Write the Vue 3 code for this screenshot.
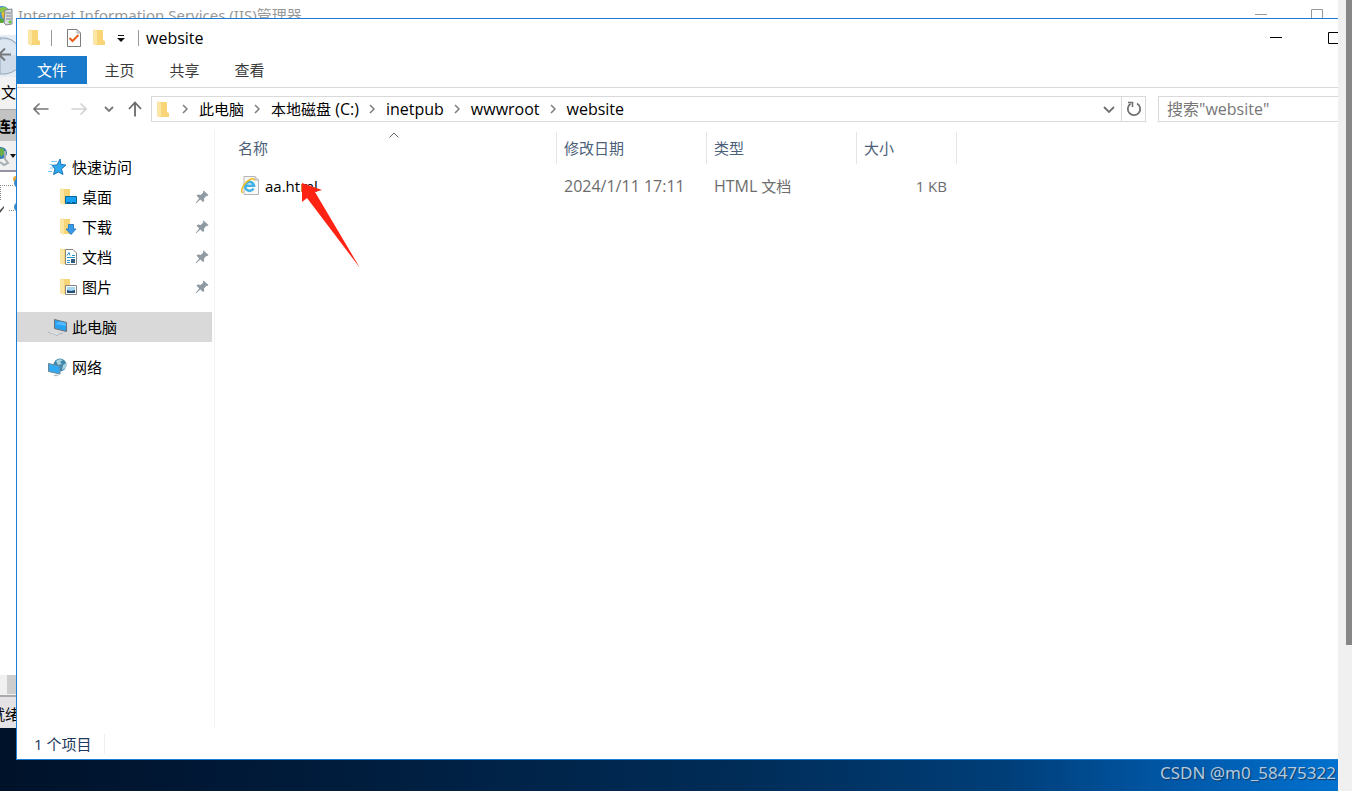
<template>
  <div class="desktop">
    <div class="desktop__screen">
      <section class="iis" aria-label="IIS">
        <header class="iis__title">
          <svg class="iis__logo" viewBox="0 0 14 22">
            <circle cx="2" cy="9" r="8" fill="#3f96d0" />
            <path d="M-2 4Q4 0 8 4L5 8L0 7Z" fill="#8fc64a" />
            <path d="M1 8L6 6L7 11L3 14Z" fill="#e8b92e" />
            <path d="M0 13L5 15L3 18H-2Z" fill="#58a83a" />
            <path d="M5 5L12 4V19L6 20L4 18Z" fill="#d7dbdd" stroke="#7f888d" />
            <path d="M6 8H11M6 11H11M6 14H11" stroke="#7c868c" />
            <circle cx="10" cy="17" r="1.5" fill="#62c938" />
          </svg>
          <span class="iis__name">Internet Information Services (IIS)管理器</span>
          <span class="iis__controls">
            <svg viewBox="0 0 12 12"><path d="M0 5.5H12" stroke="#999" /></svg>
            <svg viewBox="0 0 12 12"><path d="M.5 .5H11.5V11.5H.5Z" fill="none" stroke="#999" /></svg>
          </span>
        </header>
        <div class="iis__nav">
          <svg viewBox="0 0 16 40">
            <path d="M0 3H6Q12 4 17 9V34Q12 38 6 39H0Z" fill="#cfdbe8" stroke="#93a3b5" />
            <path d="M0 5H6Q12 6 16 11V20H0Z" fill="#dce6f0" />
            <path d="M-4 19.500H11M5 13.500L-1 19.500L5 25.500" fill="none" stroke="#77797c" stroke-width="2" />
          </svg>
        </div>
        <div class="iis__menu">文件</div>
        <div class="iis__panel">连接</div>
        <div class="iis__tools">
          <svg viewBox="0 0 16 30">
            <circle cx="1" cy="12" r="6" fill="#397fb5" />
            <path d="M-2 8L3 7L5 12L1 16Z" fill="#68ad45" />
            <path d="M5 10V18L8 22L4 24L0 21" fill="none" stroke="#a8afb4" stroke-width="2" />
            <path d="M10 13H16L13 17Z" fill="#111" />
          </svg>
        </div>
        <div class="iis__tree">
          <svg viewBox="0 0 16 50">
            <path d="M0 13.500H14M.5 15V28M9 38.500H14" fill="none" stroke="#888" stroke-dasharray="1 1" />
            <circle cx="16" cy="7" r="3" fill="#e6ae3b" />
            <circle cx="19" cy="11" r="5" fill="#3c8bc4" />
            <circle cx="19" cy="35" r="5" fill="#3c8bc4" />
            <path d="M0 38L4 34V36L0 41Z" fill="#555" />
          </svg>
        </div>
        <div class="iis__scroll"><span></span></div>
        <footer class="iis__status">就绪</footer>
      </section>

      <section class="explorer">
        <header class="titlebar">
          <svg class="folder" viewBox="0 0 12 17"><use href="#folder" /></svg>
          <i class="titlebar__rule titlebar__rule--first"></i>
          <button class="titlebar__button" type="button" aria-label="属性">
            <svg width="14" height="18" viewBox="0 0 14 18">
              <path d="M.5 .5H10L13.500 4V17.500H.5Z" fill="#fff" stroke="#7d7d7d" />
              <path d="M10 .5V4H13.500" fill="none" stroke="#a5a5a5" />
              <path d="M2.500 9L5.500 12L11.500 6" fill="none" stroke="#e8601c" stroke-width="2" />
            </svg>
          </button>
          <button class="titlebar__button titlebar__button--new" type="button" aria-label="新建文件夹">
            <svg class="folder" viewBox="0 0 12 17"><use href="#folder" /></svg>
          </button>
          <button class="titlebar__button titlebar__button--more" type="button" aria-label="自定义快速访问工具栏">
            <svg width="8" height="8" viewBox="0 0 8 8">
              <path d="M1 1.500H7" stroke="#111" />
              <path d="M0 4H8L4 8Z" fill="#111" />
            </svg>
          </button>
          <i class="titlebar__rule"></i>
          <h1 class="titlebar__title">website</h1>
          <button class="titlebar__control" type="button" aria-label="最小化">
            <svg viewBox="0 0 12 12"><path d="M0 5.500H12" stroke="#000" /></svg>
          </button>
          <button class="titlebar__control titlebar__control--max" type="button" aria-label="最大化">
            <svg viewBox="0 0 12 12"><path d="M.5 .5H11.500V11.500H.5Z" fill="none" stroke="#000" /></svg>
          </button>
        </header>

        <nav class="tabs">
          <button
            v-for="tab in tabs"
            :key="tab"
            class="tabs__item"
            :class="{ 'tabs__item--file': tab === '文件' }"
            type="button"
          >
            {{ tab }}
          </button>
        </nav>

        <div class="toolbar">
          <button class="toolbar__button" type="button" aria-label="后退">
            <svg width="16" height="16" viewBox="0 0 16 16">
              <path d="M1 8H15.500M6.500 2.500L1 8L6.500 13.500" fill="none" stroke="#767676" stroke-width="1.600" />
            </svg>
          </button>
          <button class="toolbar__button toolbar__button--forward" type="button" aria-label="前进">
            <svg width="16" height="16" viewBox="0 0 16 16">
              <path d="M.5 8H15M9.500 2.500L15 8L9.500 13.500" fill="none" stroke="#d2d2d2" stroke-width="1.600" />
            </svg>
          </button>
          <button class="toolbar__button toolbar__button--recent" type="button" aria-label="最近浏览的位置">
            <svg width="10" height="10" viewBox="0 0 10 10">
              <path d="M1 3L5 7L9 3" fill="none" stroke="#777" stroke-width="1.800" />
            </svg>
          </button>
          <button class="toolbar__button toolbar__button--up" type="button" aria-label="上移">
            <svg width="14" height="16" viewBox="0 0 14 16">
              <path d="M7 15.500V1.500M1 8L7 1.500L13 8" fill="none" stroke="#6a6a6a" stroke-width="1.800" />
            </svg>
          </button>
          <div class="address">
            <svg class="folder" viewBox="0 0 12 17"><use href="#folder" /></svg>
            <span v-for="crumb in crumbs" :key="crumb.name + crumb.latin" class="address__crumb">
              <svg width="6" height="10" viewBox="0 0 6 10">
                <path d="M1 1L5 5L1 9" fill="none" stroke="#7c7c7c" stroke-width="1.500" />
              </svg>
              <a href="#" @click.prevent>{{ crumb.name }}<span class="latin">{{ crumb.latin }}</span></a>
            </span>
            <button class="address__drop" type="button" aria-label="以前的位置">
              <svg width="12" height="10" viewBox="0 0 12 10">
                <path d="M1 3L6 8L11 3" fill="none" stroke="#707070" stroke-width="1.800" />
              </svg>
            </button>
            <button class="address__refresh" type="button" aria-label="刷新">
              <svg width="16" height="16" viewBox="0 0 16 16">
                <path d="M11 2.500A6.200 6.200 0 1 1 4.500 2.800" fill="none" stroke="#707070" stroke-width="1.800" />
                <path d="M2 1.500H6.500V6" fill="none" stroke="#707070" stroke-width="1.600" />
              </svg>
            </button>
          </div>
          <input v-model="query" class="search" type="text" aria-label="搜索" placeholder="搜索&quot;website&quot;" />
        </div>

        <div class="content">
          <nav class="sidebar">
            <a
              v-for="item in places"
              :key="item.name"
              class="sidebar__item"
              :class="{ 'sidebar__item--child': item.pinned, 'sidebar__item--active': item.active, 'sidebar__item--root': !item.pinned }"
              href="#"
              @click.prevent
            >
              <svg class="sidebar__icon" viewBox="0 0 20 20"><use :href="`#${item.icon}`" /></svg>
              <span>{{ item.name }}</span>
              <svg v-if="item.pinned" class="sidebar__pin" viewBox="0 0 14 14">
                <path d="M8.500 0.500L13.500 5L12.500 6L11.500 5.800L9 8.500L9.200 11L8 12L5.300 9.500L1.500 13L.8 13.200L1 12.500L4.200 8.500L1.500 5.500L3 4.500L5.700 5L8.300 2.500L8 1.300Z" fill="#8f9aa3" />
              </svg>
            </a>
          </nav>

          <main class="files">
            <table class="files__table">
              <colgroup>
                <col class="col-name" />
                <col class="col-date" />
                <col class="col-date" />
                <col class="col-size" />
              </colgroup>
              <thead>
                <tr>
                  <th>名称</th>
                  <th>修改日期</th>
                  <th>类型</th>
                  <th>大小</th>
                </tr>
              </thead>
              <tbody>
                <tr v-for="file in files" :key="file.name">
                  <td class="files__name">
                    <div class="files__label">
                      <svg width="20" height="20" viewBox="0 0 20 20">
                        <path d="M3 .5H14L17.500 4V18.500H3Z" fill="#f8f8f8" stroke="#b4b4b4" />
                        <path d="M14 .5V4H17.500" fill="#ddd" stroke="#b4b4b4" />
                        <path d="M12.500 12.500A4.500 4.500 0 1 1 13 9.700H5" fill="none" stroke="#44b2e5" stroke-width="2.600" />
                        <path d="M2 16.500Q-.5 16.500 1.500 11.500Q4.500 5.500 10 3Q13.500 2 13 4.500" fill="none" stroke="#f0bd2b" stroke-width="1.600" />
                      </svg>
                      <span>{{ file.name }}</span>
                    </div>
                  </td>
                  <td class="latin">{{ file.modified }}</td>
                  <td><span class="latin">{{ file.format }}</span> 文档</td>
                  <td class="files__size">{{ file.size }}</td>
                </tr>
              </tbody>
            </table>
            <svg class="files__sort" viewBox="0 0 10 6">
              <path d="M.5 5.500L5 1L9.500 5.500" fill="none" stroke="#666" />
            </svg>
            <svg class="files__arrow" viewBox="0 0 60 88">
              <path d="M1 2L21 9L14 11L59 87L6 17L1 21Z" fill="#ff2314" />
            </svg>
          </main>
        </div>

        <footer class="statusbar"><span>{{ files.length }} 个项目</span></footer>
      </section>

      <span class="watermark">CSDN @m0_58475322</span>
    </div>
    <div class="page-scroll"><span></span></div>

    <svg class="symbols" aria-hidden="true">
      <symbol id="folder" viewBox="0 0 12 17">
        <path d="M0 1H10V11L12 12V16H4L0 15Z" fill="#f5cf6b" />
        <path d="M0 0L4 2V17L0 15Z" fill="#fbe6a6" />
        <path d="M4 1H10V12H12V16H4Z" fill="#f8d678" />
      </symbol>
      <symbol id="star" viewBox="0 0 20 20">
        <path d="M12 2L13 7.500L18 8L13.500 12L15 17.500L10.500 15L5.500 17.500L7 12L4 8.300L9 8Z" fill="#30a8ee" stroke="#1c78bd" />
        <path d="M3 4.500H9M1.500 7.500H4M2 11H5M0 14.500H4" stroke="#78c6f4" />
      </symbol>
      <symbol id="desktop" viewBox="0 0 20 20">
        <use href="#folder" x="2" y="1" width="12" height="17" />
        <path d="M7.500 9.500H18.500V16.500H7.500Z" fill="#16a1f3" stroke="#08649d" />
        <path d="M9 15.500H12M14 15.500H17" stroke="#075b94" />
      </symbol>
      <symbol id="downloads" viewBox="0 0 20 20">
        <use href="#folder" x="2" y="1" width="12" height="17" />
        <path d="M10.500 7.500H15.500V12H18L13 17.500L8 12H10.500Z" fill="#3799e7" stroke="#2d80c6" />
      </symbol>
      <symbol id="documents" viewBox="0 0 20 20">
        <use href="#folder" x="2" y="1" width="12" height="17" />
        <path d="M7.500 2.500H15L18.500 6V17.500H7.500Z" fill="#fff" stroke="#858585" />
        <path d="M9 8.500L11 5.500L12 8.500M14 8.500H17M9 10.500H17M9 13.500H12M9 15.500H12" fill="none" stroke="#2494cf" />
        <path d="M13 12H17V16H13Z" fill="#315c82" />
      </symbol>
      <symbol id="pictures" viewBox="0 0 20 20">
        <use href="#folder" x="2" y="1" width="12" height="17" />
        <path d="M7.500 8.500H18.500V17.500H7.500Z" fill="#fff" stroke="#858585" />
        <path d="M9 10H17V16H9Z" fill="#a7d6f1" />
        <path d="M9 13L13 14L17 13V16H9Z" fill="#254f76" />
      </symbol>
      <symbol id="computer" viewBox="0 0 20 20">
        <path d="M6.500 2.500L18.500 5.500V14.500L6.500 11.500Z" fill="#25a3f2" stroke="#68717a" />
        <path d="M7 7L12 4.500L18 6V9Z" fill="#53baff" />
        <path d="M0 15L10 18.500M8 18L15 16" fill="none" stroke="#aab2b8" />
        <path d="M1 15L3 14.500L11 17L9 18Z" fill="#dfe3e6" />
      </symbol>
      <symbol id="network" viewBox="0 0 20 20">
        <circle cx="12" cy="8" r="6.500" fill="#3f87a9" />
        <path d="M8 4Q11 1 15 3L12 5L14 7L10 8ZM15 8L18 6V11L14 13Z" fill="#a9d2df" />
        <path d="M.5 6.500L12 9V17L.5 14.500Z" fill="#31a9f3" stroke="#6b8796" />
        <path d="M5 18L12 17.500L8 19.500Z" fill="#afb9bf" />
      </symbol>
    </svg>
  </div>
</template>

<script setup>
import { ref } from "vue";

const query = ref("");

const tabs = ["文件", "主页", "共享", "查看"];

const crumbs = [
  { name: "此电脑", latin: "" },
  { name: "本地磁盘", latin: " (C:)" },
  { name: "", latin: "inetpub" },
  { name: "", latin: "wwwroot" },
  { name: "", latin: "website" },
];

const places = [
  { name: "快速访问", icon: "star" },
  { name: "桌面", icon: "desktop", pinned: true },
  { name: "下载", icon: "downloads", pinned: true },
  { name: "文档", icon: "documents", pinned: true },
  { name: "图片", icon: "pictures", pinned: true },
  { name: "此电脑", icon: "computer", active: true },
  { name: "网络", icon: "network" },
];

const files = ref([
  { name: "aa.html", modified: "2024/1/11 17:11", format: "HTML", size: "1 KB" },
]);
</script>

<style>
body {
  margin: 0;
  overflow: hidden;
}
</style>

<style scoped>
.desktop {
  display: flex;
  height: 100vh;
  font-family: "Open Sans", "Noto Sans CJK SC", sans-serif;
  font-size: 15px;
  line-height: 20px;
  color: #000;
}

.desktop * {
  box-sizing: border-box;
}

.desktop svg {
  flex: none;
}

.desktop__screen {
  position: relative;
  display: flex;
  flex: 1;
  min-width: 0;
  padding: 18px 0 31px 16px;
  overflow: hidden;
  background: linear-gradient(90deg, #00122a 0%, #001c3c 25%, #002c57 55%, #003e78 75%, #0058a8 88%, #0071cf 100%);
}

button {
  display: flex;
  align-items: center;
  justify-content: center;
  padding: 0;
  border: none;
  background: none;
  font: inherit;
  color: inherit;
}

a {
  color: inherit;
  text-decoration: none;
}

.latin {
  font-size: 16px;
  white-space: pre;
}

.symbols {
  position: absolute;
  width: 0;
  height: 0;
}

.folder {
  width: 12px;
  height: 17px;
}

/* Window behind the explorer */
.iis {
  position: absolute;
  inset: 0 0 63px;
  display: flex;
  flex-direction: column;
  background: #fff;
}

.iis__title {
  display: flex;
  height: 35px;
  padding-top: 5px;
  color: #999;
}

.iis__logo {
  width: 14px;
  height: 22px;
}

.iis__name {
  margin-left: 4px;
  font-family: "Noto Sans", "Noto Sans CJK SC", sans-serif;
}

.iis__controls {
  display: flex;
  gap: 44px;
  margin: 4px 15px 0 auto;
}

.iis__controls svg {
  width: 12px;
  height: 12px;
}

.iis__nav {
  height: 42px;
  background: #e4ebf3;
}

.iis__nav svg,
.iis__tools svg,
.iis__tree svg {
  display: block;
  width: 16px;
}

.iis__menu {
  height: 32px;
  padding: 5px 1px;
  background: #f2f2f2;
}

.iis__panel {
  height: 32px;
  padding: 6px 0;
  border-top: 1px solid #aaa;
  background: #c3c3c3;
  font-weight: 700;
  text-indent: -4px;
}

.iis__tools {
  height: 31px;
  border-bottom: 2px solid #9492a4;
  background: #f0f0f0;
}

.iis__tree {
  flex: 1;
}

.iis__scroll {
  height: 22px;
  padding-left: 7px;
  border-bottom: 2px solid #aaa;
  background: #f0f0f0;
}

.iis__scroll span {
  display: block;
  height: 19px;
  background: #cdcdcd;
}

.iis__status {
  height: 31px;
  padding-top: 7px;
  background: #e4e2e4;
  text-indent: -10px;
}

/* Explorer */
.explorer {
  position: relative;
  display: flex;
  flex: 1;
  flex-direction: column;
  min-width: 0;
  border: 1px solid #1a7fd4;
  border-right: none;
  background: #fff;
}

.titlebar {
  display: flex;
  align-items: center;
  height: 37px;
  padding-left: 11px;
  overflow: hidden;
}

.titlebar__rule {
  width: 1px;
  height: 16px;
  background: #999;
}

.titlebar__rule--first {
  margin: 0 15px 0 11px;
}

.titlebar__button--new {
  margin-left: 12px;
}

.titlebar__button--more {
  margin: 0 13px 0 12px;
}

.titlebar__title {
  margin: 0 auto 0 7px;
  font-size: 16px;
  font-weight: 400;
}

.titlebar__control svg {
  width: 12px;
  height: 12px;
}

.titlebar__control--max {
  margin: 0 -2px 0 46px;
}

.tabs {
  display: flex;
  height: 32px;
  padding-bottom: 3px;
  border-bottom: 1px solid #d9d9d9;
  color: #3b3b3b;
}

.tabs__item {
  width: 65px;
}

.tabs__item--file {
  width: 70px;
  background: #1979ca;
  color: #fff;
}

.toolbar {
  display: flex;
  align-items: center;
  height: 42px;
  padding-left: 16px;
}

.toolbar__button--forward {
  margin-left: 22px;
}

.toolbar__button--recent {
  margin-left: 17px;
}

.toolbar__button--up {
  margin-left: 14px;
}

.address {
  display: flex;
  flex: 1;
  align-items: center;
  height: 26px;
  margin-left: 9px;
  padding-left: 5px;
  border: 1px solid #d9d9d9;
}

.address__crumb {
  display: flex;
  align-items: center;
  gap: 11px;
  margin-left: 13px;
}

.address__crumb + .address__crumb {
  margin-left: 10px;
}

.address__drop {
  width: 24px;
  height: 24px;
  margin-left: auto;
}

.address__refresh {
  width: 24px;
  height: 24px;
  border-left: 1px solid #d9d9d9;
}

.search {
  width: 180px;
  height: 26px;
  margin-left: 12px;
  padding: 0 8px;
  border: 1px solid #d9d9d9;
  border-right: none;
  background: #fff;
  font: inherit;
  font-size: 16px;
}

.search::placeholder {
  color: #767676;
  opacity: 1;
}

.content {
  display: flex;
  flex: 1;
  min-height: 0;
}

.sidebar {
  width: 198px;
  padding: 22px 2px 0 0;
  border-right: 1px solid #f2f2f2;
}

.sidebar__item {
  display: flex;
  align-items: center;
  height: 30px;
  padding: 0 3px 0 31px;
}

.sidebar__item--child {
  padding-left: 41px;
}

.sidebar__item--child + .sidebar__item--root,
.sidebar__item--root + .sidebar__item--root {
  margin-top: 10px;
}

.sidebar__item--active {
  background: #d9d9d9;
}

.sidebar__icon {
  width: 20px;
  height: 20px;
  margin-right: 4px;
}

.sidebar__pin {
  width: 14px;
  height: 14px;
  margin-left: auto;
}

.files {
  position: relative;
  flex: 1;
  padding-top: 2px;
}

.files__table {
  width: 742px;
  table-layout: fixed;
  border-spacing: 0;
  color: #6d6d6d;
}

.col-name {
  width: 342px;
}

.col-date {
  width: 150px;
}

.col-size {
  width: 100px;
}

th {
  height: 32px;
  padding: 0 7px;
  border-right: 1px solid #e5e5e5;
  color: #4c607a;
  font-weight: 400;
  text-align: left;
}

td {
  height: 44px;
  padding: 0 7px;
}

th:first-child {
  padding-left: 23px;
}

.files__name {
  padding-left: 26px;
  color: #000;
}

.files__label {
  display: flex;
  align-items: center;
  gap: 4px;
}

.files__size {
  padding-right: 10px;
  text-align: right;
}

.files__sort {
  position: absolute;
  top: 2px;
  left: 174px;
  width: 10px;
  height: 6px;
}

.files__arrow {
  position: absolute;
  top: 51px;
  left: 86px;
  width: 60px;
  height: 88px;
}

.statusbar {
  display: flex;
  align-items: center;
  height: 30px;
  padding-left: 17px;
  color: #1e395b;
}

.statusbar span {
  padding-right: 13px;
  border-right: 1px solid #eee;
}

.watermark {
  position: absolute;
  right: 2px;
  bottom: 8px;
  color: #b5c9dc;
  font-family: "Noto Sans", sans-serif;
  font-size: 17px;
  text-shadow: 1px 1px 1px #123a66;
}

.page-scroll {
  width: 14px;
  padding-left: 8px;
  background: #f0f0f0;
}

.page-scroll span {
  display: block;
  height: calc(82% - 4px);
  background: #868686;
}
</style>
